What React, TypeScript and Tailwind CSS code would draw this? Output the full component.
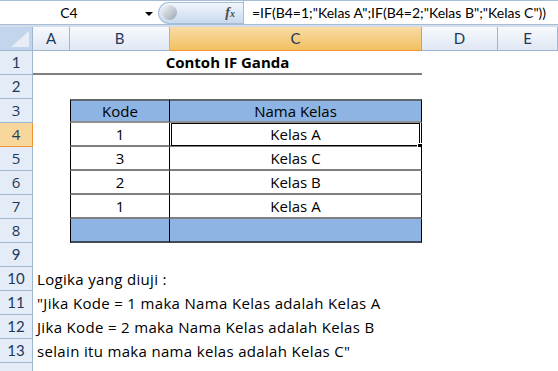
import * as React from "react";

const FONT = { fontFamily: "Lato, 'Open Sans', sans-serif" };
const CELL = { fontFamily: "'Open Sans', Lato, sans-serif" };

type Row = {
  n: number;
  kind: "title" | "empty" | "head" | "data" | "foot" | "text";
  b?: string;
  c?: string;
  text?: string;
};

const rows: Row[] = [
  { n: 1, kind: "title" },
  { n: 2, kind: "empty" },
  { n: 3, kind: "head", b: "Kode", c: "Nama Kelas" },
  { n: 4, kind: "data", b: "1", c: "Kelas A" },
  { n: 5, kind: "data", b: "3", c: "Kelas C" },
  { n: 6, kind: "data", b: "2", c: "Kelas B" },
  { n: 7, kind: "data", b: "1", c: "Kelas A" },
  { n: 8, kind: "foot" },
  { n: 9, kind: "empty" },
  { n: 10, kind: "text", text: "Logika yang diuji :" },
  { n: 11, kind: "text", text: "\"Jika Kode = 1 maka Nama Kelas adalah Kelas A" },
  { n: 12, kind: "text", text: "Jika Kode = 2 maka Nama Kelas adalah Kelas B" },
  { n: 13, kind: "text", text: "selain itu maka nama kelas adalah Kelas C\"" },
  { n: 14, kind: "empty" },
];

function FormulaBar() {
  return (
    <div className="flex h-[25px] border-t border-b border-[#a7bcd6] bg-white">
      <div className="relative flex w-[158px] items-center justify-center text-[14px] text-black">
        <span className="pr-[20px]">C4</span>
        <span className="absolute right-[5px] top-[11px] h-0 w-0 border-x-[4px] border-t-[4px] border-x-transparent border-t-black" />
      </div>
      <div className="relative flex w-[85px] items-center">
        <div className="flex h-[22px] w-full items-center justify-between rounded-l-full border border-r-0 border-[#a4bed9] bg-gradient-to-b from-[#f1f6fc] to-[#c9d9ee] pl-[3px] pr-[8px]">
          <span className="h-[15px] w-[15px] rounded-full bg-gradient-to-br from-[#f5f5f5] to-[#9aa6b3]" />
          <span className="text-[14px] italic font-bold text-[#4a4a4a]" style={{ fontFamily: "'Liberation Serif', serif" }}>
            f<span className="text-[10px]">x</span>
          </span>
        </div>
      </div>
      <div className="flex flex-1 items-center border-l border-[#a7bcd6] pl-[8px] text-[14px] whitespace-nowrap text-black">
        =IF(B4=1;"Kelas A";IF(B4=2;"Kelas B";"Kelas C"))
      </div>
    </div>
  );
}

function ColHead({ w, label, active }: { w: string; label: string; active?: boolean }) {
  return (
    <div
      className={
        active
          ? `${w} flex items-center justify-center border-r border-b border-[#f29436] bg-gradient-to-b from-[#f9dba4] to-[#f1c15f] text-[15px] text-[#1e395b]`
          : `${w} flex items-center justify-center border-r border-b border-[#9eb6ce] bg-gradient-to-b from-[#f7f9fd] to-[#e0e8f4] text-[15px] text-[#1e395b]`
      }
    >
      {label}
    </div>
  );
}

function SheetRow({ row }: { row: Row }) {
  const active = row.n === 4;
  const rowHead = (
    <div
      className={
        active
          ? "flex w-[33px] shrink-0 items-center justify-center border-r border-b border-[#f29436] bg-[#f8d79c] text-[15px] text-[#1e395b]"
          : "flex w-[33px] shrink-0 items-center justify-center border-r border-b border-[#9eb6ce] bg-[#e4ecf7] text-[15px] text-[#1e395b]"
      }
    >
      {row.n < 14 ? row.n : ""}
    </div>
  );

  if (row.kind === "title") {
    return (
      <div className="flex h-[24px]">
        {rowHead}
        <div className="flex w-[389px] items-center justify-center border-b-2 border-[#7f7f7f] font-bold text-black" style={CELL}>
          Contoh IF Ganda
        </div>
      </div>
    );
  }

  if (row.kind === "text") {
    return (
      <div className="flex h-[24px]">
        {rowHead}
        <div className="flex items-center pl-[4px] whitespace-nowrap tracking-[0.33px] text-black" style={CELL}>
          {row.text}
        </div>
      </div>
    );
  }

  if (row.kind === "empty") {
    return <div className="flex h-[24px]">{rowHead}</div>;
  }

  const blue = row.kind === "head" || row.kind === "foot";
  const top = row.kind === "head" ? "border-t-2 border-t-[#5f6670]" : "";
  const bottom =
    row.kind === "foot"
      ? "border-b-2 border-b-[#3f4a57]"
      : row.kind === "head"
        ? "border-b-2 border-b-[#8f8f8f]"
        : "border-b-2 border-b-[#7f7f7f]";
  const bg = blue ? "bg-[#8db4e2]" : "bg-white";

  return (
    <div className="flex h-[24px]" style={CELL}>
      {rowHead}
      <div className="w-[37px]" />
      <div className={`flex w-[100px] items-center justify-center border-x border-x-black ${top} ${bottom} ${bg} text-black`}>
        {row.b}
      </div>
      <div className={`relative flex w-[252px] items-center justify-center border-r border-r-black ${top} ${bottom} ${bg} text-black`}>
        {row.c}
        {active && (
          <div className="absolute left-[1px] top-0 right-[1px] bottom-[-1px] border border-black">
            <span className="absolute right-[-4px] bottom-[-4px] h-[6px] w-[6px] border border-white bg-black" />
          </div>
        )}
      </div>
    </div>
  );
}

export default function App() {
  return (
    <div className="h-[371px] w-[558px] overflow-hidden bg-white text-[15px]" style={FONT}>
      <FormulaBar />
      <div className="h-[2px] bg-[#d4deeb]" />
      <div className="flex h-[24px]">
        <div className="relative w-[33px] border-r border-b border-[#9eb6ce] bg-[#c2d5ed]">
          <svg className="absolute right-[3px] bottom-[3px]" width="18" height="16" viewBox="0 0 18 16">
            <polygon points="18,0 18,16 0,16" fill="#e6edf7" />
          </svg>
        </div>
        <ColHead w="w-[37px]" label="A" />
        <ColHead w="w-[100px]" label="B" />
        <ColHead w="w-[252px]" label="C" active />
        <ColHead w="w-[76px]" label="D" />
        <ColHead w="flex-1" label="E" />
      </div>
      {rows.map((r) => (
        <SheetRow key={r.n} row={r} />
      ))}
    </div>
  );
}
